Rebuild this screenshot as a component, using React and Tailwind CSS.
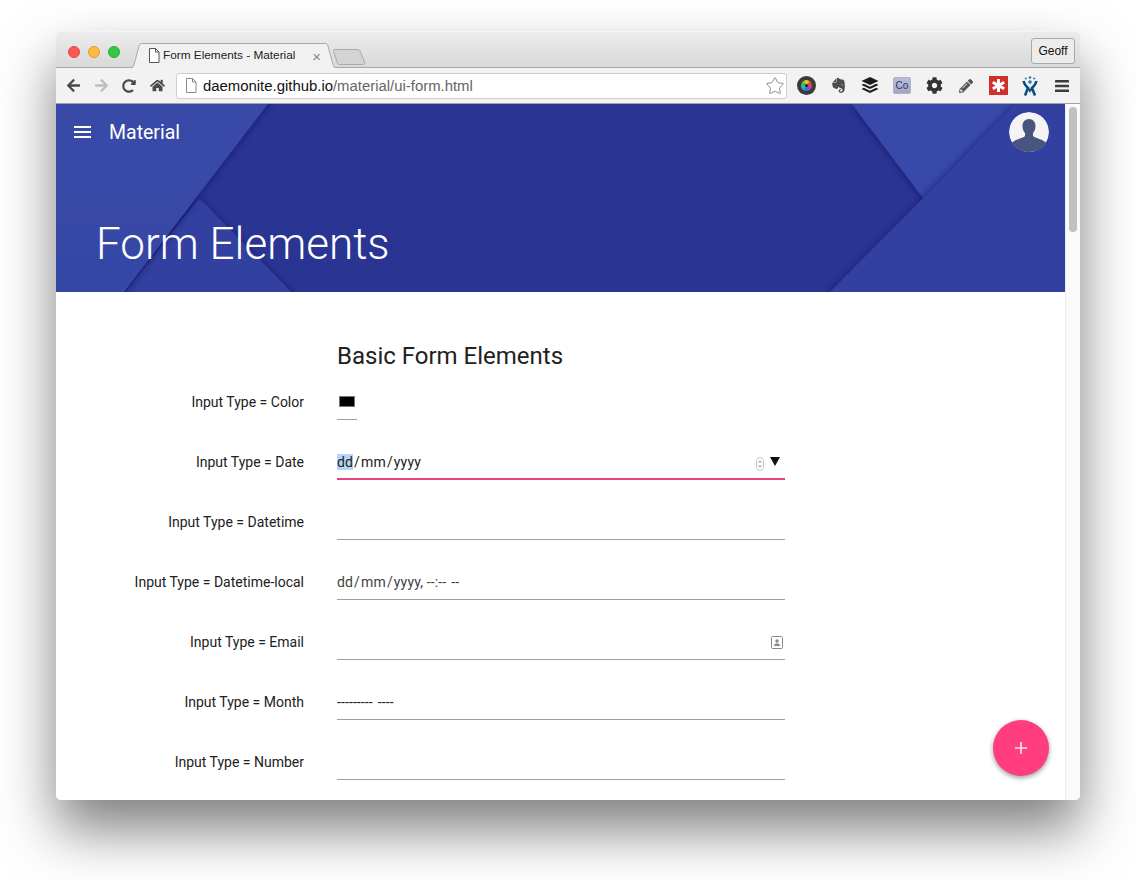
import React from "react";
import { FaArrowLeft, FaArrowRight, FaRedoAlt, FaHome, FaCog, FaPencilAlt, FaEvernote } from "react-icons/fa";
import { Star } from "lucide-react";

function PageIcon({ className }) {
  return (
    <svg className={className} width="12" height="15" viewBox="0 0 12 15" fill="none" stroke="currentColor">
      <path d="M1.5 .5h6l3.5 3.5v10.5h-9.5z" fill="#fff" />
      <path d="M7.5 .5v3.5h3.5" />
    </svg>
  );
}

function Traffic() {
  return (
    <div className="flex gap-2 ml-3 mt-[14px]">
      <div className="w-3 h-3 rounded-full bg-[#fc5753] border border-[#df4744]" />
      <div className="w-3 h-3 rounded-full bg-[#fdbc40] border border-[#de9f34]" />
      <div className="w-3 h-3 rounded-full bg-[#33c748] border border-[#27aa35]" />
    </div>
  );
}

function Tab() {
  return (
    <div className="relative w-[207px] h-[25px] ml-[10px] mt-[11px] flex items-center pl-[18px] pr-4">
      <svg className="absolute inset-0" width="207" height="25" viewBox="0 0 207 25">
        <path
          d="M0 24.500h1c2 0 2.500-1 3-3L9 3c.5-1.800 1.500-2.500 3-2.500h183c1.500 0 2.500.7 3 2.500l5 18.500c.5 2 1 3 3 3h1"
          fill="#f1f1f1"
          stroke="#a8a8a8"
        />
        <rect x="3" y="24" width="201" height="1" fill="#f1f1f1" />
      </svg>
      <PageIcon className="relative text-[#555] shrink-0" />
      <span className="relative ml-[3px] mt-[1px] font-['Liberation_Sans',sans-serif] text-[11.800px] text-[#222] whitespace-nowrap">
        Form Elements - Material
      </span>
      <span className="relative ml-auto mt-[1px] text-[#888] text-[15px] leading-none font-['Liberation_Sans',sans-serif]">×</span>
    </div>
  );
}

function NewTab() {
  return (
    <svg className="ml-[-4px] mt-[16px]" width="34" height="18" viewBox="0 0 34 18">
      <path d="M1 1.500h23c2 0 3 1 3.500 2.500l4 10c.5 1.500 0 2.500-2 2.500H7c-2 0-2.500-1-3-2.500L.5 3C.2 2 .5 1.500 1 1.500z" fill="#d4d4d4" stroke="#a9a9a9" />
    </svg>
  );
}

function Lens() {
  return (
    <div className="w-[19px] h-[19px] rounded-full bg-[#3a3a3a] flex items-center justify-center">
      <div className="w-[11px] h-[11px] rounded-full bg-[conic-gradient(#f5d327,#e8412f,#b63fb5,#2f6fd8,#2cb7c4,#46b649,#f5d327)] flex items-center justify-center">
        <div className="w-[3px] h-[3px] rounded-full bg-[#222]" />
      </div>
    </div>
  );
}

function Layers() {
  return (
    <svg width="18" height="18" viewBox="0 0 18 18" fill="#1d1d1d">
      <path d="M9 0l8.500 4L9 8 .5 4z" />
      <path d="M2.800 6.800L9 9.700l6.200-2.900 2.300 1.200L9 12 .5 8z" />
      <path d="M2.800 10.800L9 13.700l6.200-2.900 2.300 1.200L9 16 .5 12z" />
    </svg>
  );
}

function CoBadge() {
  return (
    <div className="w-[18px] h-[17px] rounded-[2px] bg-gradient-to-b from-[#b9bbdd] to-[#a3a5c9] border border-[#b0b0c8] flex items-center justify-center font-['Liberation_Sans',sans-serif] text-[10px] leading-none text-[#2b3a55]">
      Co
    </div>
  );
}

function RedStar() {
  return (
    <div className="w-[19px] h-[19px] bg-[#d1302a] flex items-center justify-center">
      <svg width="13" height="13" viewBox="0 0 13 13" stroke="#fff" strokeWidth="3">
        <path d="M6.500 0v13M.8 3.200l11.400 6.600M12.200 3.200L.8 9.800" />
      </svg>
    </div>
  );
}

function Figure() {
  return (
    <svg width="16" height="20" viewBox="0 0 16 20" fill="none">
      <circle cx="8" cy="1.500" r="1.300" fill="#2a7ab0" />
      <circle cx="3.800" cy="2.500" r="1.100" fill="#2a7ab0" />
      <circle cx="12.200" cy="2.500" r="1.100" fill="#2a7ab0" />
      <circle cx="8" cy="6" r="1.800" fill="#2a7ab0" />
      <path d="M1.500 5c1 4 3 5.500 4.500 7L3 19.500M14.500 5c-1 4-3 5.500-4.500 7l3 7.500" stroke="#0b4d80" strokeWidth="2.600" />
      <path d="M6 12l2 3 2-3" stroke="#0b4d80" strokeWidth="2" />
    </svg>
  );
}

function Burger({ className }) {
  return (
    <svg className={className} width="14" height="12" viewBox="0 0 14 12" fill="#3c3c3c">
      <rect width="14" height="2.600" rx=".6" />
      <rect y="4.700" width="14" height="2.600" rx=".6" />
      <rect y="9.400" width="14" height="2.600" rx=".6" />
    </svg>
  );
}

function ExtSlot({ children }) {
  return <div className="w-8 h-5 flex items-center justify-center">{children}</div>;
}

function Toolbar() {
  return (
    <div className="h-9 bg-[#f2f2f2] border-b border-[#a3a3a3] flex items-center">
      <div className="w-7 ml-[3px] flex justify-center text-[#4a4a4a]"><FaArrowLeft size={15} /></div>
      <div className="w-7 flex justify-center text-[#bdbdbd]"><FaArrowRight size={15} /></div>
      <div className="w-7 flex justify-center text-[#4a4a4a]"><FaRedoAlt size={14} /></div>
      <div className="w-7 flex justify-center text-[#4a4a4a]"><FaHome size={15} /></div>
      <div className="w-[611px] h-[26px] ml-[5px] bg-white border border-[#cfcfcf] rounded-[3px] flex items-center pl-[8px] pr-[1px]">
        <PageIcon className="text-[#8a8a8a]" />
        <div className="ml-[6px] mt-[1px] font-['Liberation_Sans',sans-serif] text-[14.900px] text-[#111] whitespace-nowrap">
          daemonite.github.io<span className="text-[#666]">/material/ui-form.html</span>
        </div>
        <Star className="ml-auto text-[#777]" size={20} strokeWidth={1} />
      </div>
      <div className="flex ml-[3px]">
        <ExtSlot><Lens /></ExtSlot>
        <ExtSlot><FaEvernote size={17} className="text-[#4d4d4d]" /></ExtSlot>
        <ExtSlot><Layers /></ExtSlot>
        <ExtSlot><CoBadge /></ExtSlot>
        <ExtSlot><FaCog size={17} className="text-[#333]" /></ExtSlot>
        <ExtSlot><FaPencilAlt size={14} className="text-[#555]" /></ExtSlot>
        <ExtSlot><RedStar /></ExtSlot>
        <ExtSlot><Figure /></ExtSlot>
        <ExtSlot><Burger /></ExtSlot>
      </div>
    </div>
  );
}

function HeaderArt() {
  return (
    <svg className="absolute inset-0" width="1009" height="188" viewBox="0 0 1009 188">
      <defs>
        <filter id="fold" x="-20%" y="-20%" width="140%" height="140%">
          <feDropShadow dx="0" dy="1" stdDeviation="4" floodColor="#10174f" floodOpacity="0.55" />
        </filter>
        <linearGradient id="leftPanel" x1="0" y1="0" x2="0" y2="1">
          <stop offset="0" stopColor="#3a4aa8" />
          <stop offset="1" stopColor="#3546a5" />
        </linearGradient>
      </defs>
      <rect width="1009" height="188" fill="#2a3593" />
      <polygon points="143,94 60,200 247,200" fill="#3241a0" filter="url(#fold)" />
      <polygon points="796,0 867,94 959,0" fill="#3949a9" filter="url(#fold)" />
      <polygon points="867,94 959,0 1030,-20 1030,210 752,210" fill="#303f9f" filter="url(#fold)" />
      <polygon points="-30,-20 227,-20 68,188 55,210 -30,210" fill="url(#leftPanel)" filter="url(#fold)" />
    </svg>
  );
}

function Avatar() {
  return (
    <svg width="40" height="40" viewBox="0 0 40 40" className="rounded-full">
      <circle cx="20" cy="20" r="20" fill="#f4f4f6" />
      <path
        d="M20 7c-4 0-6.500 3-6.500 7 0 3 1 5.500 2.500 7v3c-1 1.500-6 2.500-10 4.500L1 32c4 5 11 8 19 8s15-3 19-8l-5-3.500c-4-2-9-3-10-4.500v-3c1.500-1.500 2.500-4 2.500-7 0-4-2.500-7-6.500-7z"
        fill="#49547f"
      />
    </svg>
  );
}

function Row({ label, line = "border-[#9e9e9e]", short, children }) {
  return (
    <div className="flex h-9 mb-6">
      <div className="w-[248px] shrink-0 text-right text-sm leading-9 text-[#212121]">{label}</div>
      <div className={`ml-[33px] h-9 flex items-center border-b ${line} ${short ? "w-5" : "w-[448px]"} relative`}>
        {children}
      </div>
    </div>
  );
}

export default function App() {
  return (
    <div className="w-[1136px] h-[880px] bg-white pl-14 pt-[31px] overflow-hidden font-['Roboto',sans-serif]">
      <div className="w-[1024px] h-[769px] rounded-[5px] overflow-hidden relative flex flex-col shadow-[0_30px_55px_0_rgba(0,0,0,0.5)]">
        <div className="h-[37px] shrink-0 flex bg-gradient-to-b from-[#ececec] to-[#d9d9d9] border-b border-[#a8a8a8] border-t border-t-[#f5f5f5] relative">
          <Traffic />
          <Tab />
          <NewTab />
          <div className="ml-auto mr-[5px] mt-[6px] w-[44px] h-[26px] border border-[#a9a9a9] rounded-[3px] bg-[#ececec] flex items-center justify-center font-['Liberation_Sans',sans-serif] text-xs text-[#111]">
            Geoff
          </div>
        </div>
        <Toolbar />
        <div className="flex-1 flex min-h-0">
          <div className="w-[1009px] shrink-0 bg-white">
            <div className="relative h-[188px] overflow-hidden text-white">
              <HeaderArt />
              <div className="relative flex justify-between pt-2 pl-[18px] pr-4">
                <div className="flex items-center h-10">
                  <svg width="17" height="12" viewBox="0 0 17 12" fill="#fff">
                    <rect width="17" height="2" />
                    <rect y="5" width="17" height="2" />
                    <rect y="10" width="17" height="2" />
                  </svg>
                  <span className="ml-[18px] mt-[1px] text-[19.500px] font-normal">Material</span>
                </div>
                <Avatar />
              </div>
              <h1 className="relative ml-[40px] mt-[64px] text-[44px] leading-[56px] font-light whitespace-nowrap">Form Elements</h1>
            </div>
            <div className="pt-12">
              <h2 className="ml-[281px] text-2xl leading-8 font-normal text-[#212121] mb-3">Basic Form Elements</h2>
              <Row label="Input Type = Color" short>
                <div className="w-4 h-[11px] ml-[2px] mt-[-1px] bg-black border border-[#777]" />
              </Row>
              <Row label="Input Type = Date" line="border-b-2 border-[#e8437f]">
                <span className="text-sm text-[#212121] tracking-[0.15px] mt-[1px]">
                  <span className="bg-[#b4d5f7]">dd</span><span className="mx-[1px]">/</span>mm<span className="mx-[1px]">/</span>yyyy
                </span>
                <div className="absolute right-[21px] top-[13px] w-[8px] h-[14px] border border-[#c4c4c4] rounded-full flex flex-col items-center justify-center text-[#666]">
                  <svg width="6" height="10" viewBox="0 0 6 10" fill="none" stroke="currentColor" strokeWidth=".8">
                    <path d="M1.500 3.500L3 2l1.500 1.500M1.500 6.500L3 8l1.500-1.500" />
                  </svg>
                </div>
                <svg className="absolute right-[5px] top-[13px]" width="10" height="9" viewBox="0 0 10 9" fill="#111">
                  <path d="M0 0h10L5 9z" />
                </svg>
              </Row>
              <Row label="Input Type = Datetime" />
              <Row label="Input Type = Datetime-local">
                <span className="text-sm text-[#424242] tracking-[0.15px] whitespace-pre">
                  dd<span className="mx-[1px]">/</span>mm<span className="mx-[1px]">/</span>yyyy, --:--<span className="ml-[5px]">--</span>
                </span>
              </Row>
              <Row label="Input Type = Email">
                <svg className="absolute right-[2px] top-[12px]" width="12" height="13" viewBox="0 0 12 13" fill="none" stroke="#888">
                  <rect x=".5" y=".5" width="11" height="12" rx="1" />
                  <circle cx="6" cy="5" r="1.700" fill="#888" stroke="none" />
                  <path d="M3 10c0-2 1.500-2.500 3-2.500S9 8 9 10z" fill="#888" stroke="none" />
                </svg>
              </Row>
              <Row label="Input Type = Month">
                <span className="text-sm text-[#212121] whitespace-pre tracking-[0.1px]">
                  ---------<span className="ml-[5px]">----</span>
                </span>
              </Row>
              <Row label="Input Type = Number" />
            </div>
          </div>
          <div className="w-[15px] shrink-0 bg-[#fafafa] border-l border-[#ececec] pt-[3px] pl-[3px]">
            <div className="w-2 h-[125px] rounded-full bg-[#c1c1c1]" />
          </div>
        </div>
        <button className="absolute left-[937px] top-[689px] w-14 h-14 rounded-full bg-[#ff3d7f] text-white flex items-center justify-center shadow-[0_2px_5px_rgba(0,0,0,0.4)]">
          <svg width="12" height="12" viewBox="0 0 12 12" stroke="#fbe3ec" strokeWidth="1.600">
            <path d="M6 0v12M0 6h12" />
          </svg>
        </button>
      </div>
    </div>
  );
}
